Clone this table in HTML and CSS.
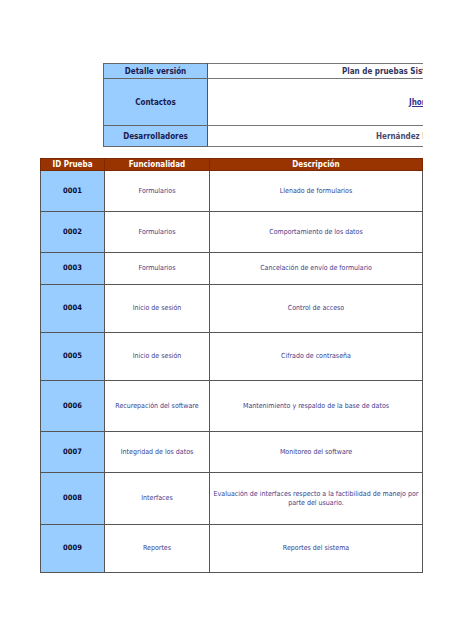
FILE: index.html
```html
<!DOCTYPE html>
<html lang="es">
<head>
<meta charset="utf-8">
<link rel="stylesheet" href="styles.css">
</head>
<body>
<div class="page">
  <div class="info-wrap">
    <table class="info">
      <tr class="r1"><th>Detalle versión</th><td><span class="v1">Plan de pruebas Sistema</span></td></tr>
      <tr class="r2"><th>Contactos</th><td><span class="v2"><u>Jhon</u></span></td></tr>
      <tr class="r3"><th>Desarrolladores</th><td><span class="v3">Hernández Fernández</span></td></tr>
    </table>
  </div>
  <table class="tests">
    <tr class="head"><th>ID Prueba</th><th>Funcionalidad</th><th>Descripción</th></tr>
    <tr class="h41"><td class="id">0001</td><td>Formularios</td><td>Llenado de formularios</td></tr>
    <tr class="h41"><td class="id">0002</td><td>Formularios</td><td>Comportamiento de los datos</td></tr>
    <tr class="h32"><td class="id">0003</td><td>Formularios</td><td>Cancelación de envío de formulario</td></tr>
    <tr class="h48"><td class="id">0004</td><td>Inicio de sesión</td><td>Control de acceso</td></tr>
    <tr class="h48"><td class="id">0005</td><td>Inicio de sesión</td><td>Cifrado de contraseña</td></tr>
    <tr class="h51"><td class="id">0006</td><td>Recurepación del software</td><td>Mantenimiento y respaldo de la base de datos</td></tr>
    <tr class="h41"><td class="id">0007</td><td>Integridad de los datos</td><td>Monitoreo del software</td></tr>
    <tr class="h52"><td class="id">0008</td><td>Interfaces</td><td>Evaluación de interfaces respecto a la factibilidad de manejo por parte del usuario.</td></tr>
    <tr class="h48"><td class="id">0009</td><td>Reportes</td><td>Reportes del sistema</td></tr>
  </table>
</div>
</body>
</html>
```
FILE: styles.css
```css
html, body {
  margin: 0;
  padding: 0;
  background: #ffffff;
}
.page {
  width: 474px;
  height: 632px;
  position: relative;
  overflow: hidden;
  font-family: "DejaVu Sans Condensed", "DejaVu Sans", sans-serif;
}
.info-wrap {
  margin: 63px 0 0 103px;
  width: 320px;
  overflow: hidden;
}
.info {
  border-collapse: collapse;
  table-layout: fixed;
  width: 420px;
}
.info th {
  width: 103px;
  background: #99ccff;
  color: #1a1a4d;
  font-size: 8px;
  font-weight: bold;
  text-align: center;
  border: 1px solid #666;
  border-right: 1.5px solid #555;
  padding: 0;
}
.info td {
  border-top: 1px solid #777;
  border-bottom: 1px solid #777;
  padding: 0;
  white-space: nowrap;
  overflow: hidden;
  font-size: 8px;
  font-weight: bold;
  color: #33335c;
}
.info .r1 { height: 15px; }
.info .r2 { height: 47px; }
.info .r3 { height: 21px; }
.v1 { padding-left: 134px; }
.v2 { padding-left: 201px; color: #333399; }
.v3 { padding-left: 168px; color: #4a4a6e; }

.tests {
  margin: 11px 0 0 40px;
  border-collapse: collapse;
  table-layout: fixed;
  width: 383px;
}
.tests th, .tests td {
  border: 1px solid #555;
  padding: 0 2px;
  text-align: center;
  vertical-align: middle;
}
.tests .head { height: 12px; }
.tests .head th {
  background: #993300;
  color: #ffffff;
  font-size: 8px;
  font-weight: bold;
  border-color: #7a2a00;
}
.tests th:nth-child(1) { width: 59px; }
.tests th:nth-child(2) { width: 100px; }
.tests td {
  font-size: 7px;
  color: #3c3c8a;
  line-height: 1.15;
}
.tests td.id {
  background: #99ccff;
  color: #0a0a2e;
  font-size: 7.5px;
  font-weight: bold;
}
.h32 { height: 32px; }
.h41 { height: 41px; }
.h48 { height: 48px; }
.h51 { height: 51px; }
.h52 { height: 52px; }
```
